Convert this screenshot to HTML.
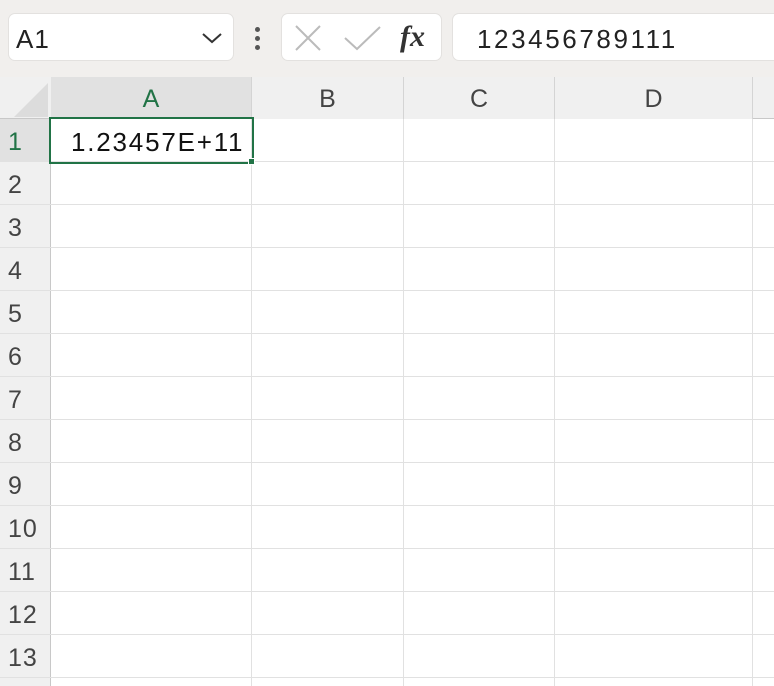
<!DOCTYPE html>
<html><head><meta charset="utf-8"><style>
*{margin:0;padding:0;box-sizing:border-box}
html,body{width:774px;height:686px;overflow:hidden}
body{background:#fff;font-family:"Liberation Sans",sans-serif;position:relative}
.a{position:absolute}
.top{left:0;top:0;width:774px;height:77px;background:#f1efed}
.box{background:#fff;border:1px solid #e3e1df;border-radius:7px}
.hd{background:#f0f0f0;color:#444;font-size:25px;text-align:center}
.vl{width:1px;background:#e1e1e1}
.hl{height:1px;background:#e1e1e1}
</style></head><body>
<div class="a top"></div>
<div class="a box" style="left:8px;top:13px;width:226px;height:48px"></div>
<div class="a" style="left:16px;top:24px;font-size:26px;color:#222;letter-spacing:1px">A1</div>
<svg class="a" style="left:200px;top:31px" width="24" height="14"><path d="M3 3 L12 11 L21 3" stroke="#333" stroke-width="2" fill="none"/></svg>
<div class="a" style="left:255px;top:27px;width:5px;height:5px;border-radius:50%;background:#555"></div>
<div class="a" style="left:255px;top:36px;width:5px;height:5px;border-radius:50%;background:#555"></div>
<div class="a" style="left:255px;top:45px;width:5px;height:5px;border-radius:50%;background:#555"></div>
<div class="a box" style="left:281px;top:13px;width:161px;height:48px"></div>
<svg class="a" style="left:290px;top:22px" width="120" height="32"><path d="M6 4 L30 28 M30 4 L6 28" stroke="#bbb" stroke-width="2"/><path d="M55 16 L67 27 L90 5" stroke="#bbb" stroke-width="2" fill="none"/></svg>
<div class="a" style="left:400px;top:20px;font-family:'Liberation Serif',serif;font-style:italic;font-weight:bold;font-size:30px;color:#333">fx</div>
<div class="a box" style="left:452px;top:13px;width:322px;height:48px;border-right:none;border-radius:7px 0 0 7px"></div>
<div class="a" style="left:477px;top:24px;font-size:26px;color:#222;letter-spacing:2.6px">123456789111</div>

<div class="a hd" style="left:0;top:77px;width:774px;height:42px;border-bottom:1px solid #c8c8c8"></div>
<svg class="a" style="left:0;top:77px" width="51" height="42"><path d="M14 40 L48 40 L48 6 Z" fill="#dcdcdc"/></svg>
<div class="a hd" style="left:51px;top:77px;width:200px;height:42px;background:#e1e1e1;color:#217346;line-height:44px">A</div>
<div class="a hd" style="left:252px;top:77px;width:151px;height:42px;line-height:44px">B</div>
<div class="a hd" style="left:404px;top:77px;width:150px;height:42px;line-height:44px">C</div>
<div class="a hd" style="left:555px;top:77px;width:197px;height:42px;line-height:44px">D</div>
<div class="a" style="left:251px;top:77px;width:1px;height:42px;background:#d4d4d4"></div>
<div class="a" style="left:403px;top:77px;width:1px;height:42px;background:#d4d4d4"></div>
<div class="a" style="left:554px;top:77px;width:1px;height:42px;background:#d4d4d4"></div>
<div class="a" style="left:752px;top:77px;width:1px;height:42px;background:#d4d4d4"></div>

<div class="a hd" style="left:0;top:119px;width:51px;height:567px;border-right:1px solid #c8c8c8"></div>
<div class="a" style="left:0;top:119px;width:50px;height:43px;background:#e1e1e1"></div>

<div class="a vl" style="left:251px;top:119px;height:567px"></div>
<div class="a vl" style="left:403px;top:119px;height:567px"></div>
<div class="a vl" style="left:554px;top:119px;height:567px"></div>
<div class="a vl" style="left:752px;top:119px;height:567px"></div>

<div id="rows"></div>
<script>
var h='';for(var i=0;i<13;i++){var y=119+i*43;
h+='<div class="a hl" style="left:0;top:'+(y+42)+'px;width:774px"></div>';
h+='<div class="a" style="left:0;top:'+y+'px;width:50px;height:42px;line-height:47px;text-align:left;padding-left:8px;font-size:25px;letter-spacing:1px;color:'+(i==0?'#217346':'#444')+'">'+(i+1)+'</div>';}
document.getElementById('rows').innerHTML=h;
</script>
<div class="a" style="left:49px;top:117px;width:205px;height:47px;border:2px solid #217346"></div>
<div class="a" style="left:248px;top:158px;width:7px;height:7px;background:#217346;border:1px solid #fff"></div>
<div class="a" style="left:71px;top:127px;font-size:26px;color:#111;letter-spacing:1.8px">1.23457E+11</div>
</body></html>
